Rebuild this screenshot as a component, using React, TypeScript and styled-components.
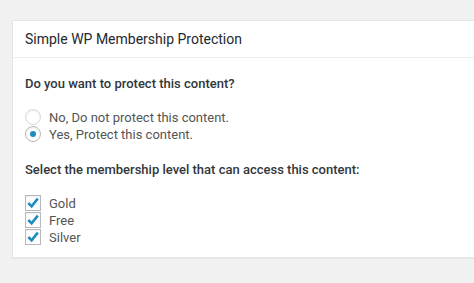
import React from "react";
import styled, { createGlobalStyle } from "styled-components";

const Global = createGlobalStyle`
  html, body { margin: 0; padding: 0; background: #f1f1f1; }
  body { font-family: Roboto, "Open Sans", "Liberation Sans", sans-serif; }
`;

const Page = styled.div`
  padding: 20px 0 0 12px;
  min-height: 283px;
  box-sizing: border-box;
`;

const Panel = styled.div`
  background: #fff;
  border: 1px solid #e5e5e5;
  border-right: none;
  box-shadow: 0 1px 1px rgba(0, 0, 0, 0.04);
`;

const Header = styled.div`
  height: 35px;
  display: flex;
  align-items: center;
  padding: 0 12px 1px;
  border-bottom: 1px solid #eee;
  font-size: 14px;
  color: #23282d;
`;

const Body = styled.div`
  padding: 16px 12px 12px;
  display: flex;
  flex-direction: column;
`;

const Question = styled.div<{ $gap?: number }>`
  font-size: 13px;
  font-weight: 500;
  color: #32373c;
  line-height: 20px;
  margin-top: ${(p) => p.$gap ?? 0}px;
  margin-bottom: 15px;
`;

const OptionList = styled.div`
  display: flex;
  flex-direction: column;
  gap: 1px;
`;

const Option = styled.label`
  display: flex;
  align-items: center;
  gap: 8px;
  height: 16px;
  font-size: 13px;
  color: #555;
`;

const Radio = styled.span<{ $checked?: boolean }>`
  width: 14px;
  height: 14px;
  border-radius: 50%;
  border: 1px solid ${(p) => (p.$checked ? "#b4b9be" : "#d5d9dc")};
  box-shadow: inset 0 1px 2px rgba(0, 0, 0, 0.07);
  display: flex;
  align-items: center;
  justify-content: center;
  flex: none;
  &::after {
    content: "";
    display: ${(p) => (p.$checked ? "block" : "none")};
    width: 6px;
    height: 6px;
    border-radius: 50%;
    background: #1e8cbe;
  }
`;

const Box = styled.span`
  width: 14px;
  height: 14px;
  border: 1px solid #b4b9be;
  box-shadow: inset 0 1px 2px rgba(0, 0, 0, 0.07);
  display: flex;
  align-items: center;
  justify-content: center;
  flex: none;
`;

const Check = () => (
  <svg width="14" height="14" viewBox="0 0 14 14">
    <path d="M2.3 7 L5.6 10.3 L11.8 2.6" fill="none" stroke="#1e8cbe" strokeWidth="2.6" />
  </svg>
);

export default function App() {
  return (
    <Page>
      <Global />
      <Panel>
        <Header>Simple WP Membership Protection</Header>
        <Body>
          <Question>Do you want to protect this content?</Question>
          <OptionList>
            <Option>
              <Radio />
              No, Do not protect this content.
            </Option>
            <Option>
              <Radio $checked />
              Yes, Protect this content.
            </Option>
          </OptionList>
          <Question $gap={18}>Select the membership level that can access this content:</Question>
          <OptionList>
            {["Gold", "Free", "Silver"].map((l) => (
              <Option key={l}>
                <Box>
                  <Check />
                </Box>
                {l}
              </Option>
            ))}
          </OptionList>
        </Body>
      </Panel>
    </Page>
  );
}
